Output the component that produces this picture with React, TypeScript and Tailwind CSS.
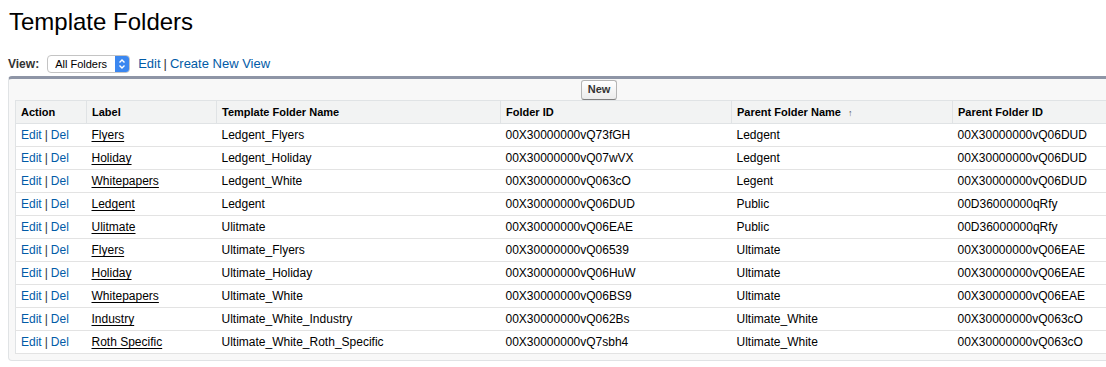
import React from 'react';

interface FolderRow {
  label: string;
  name: string;
  id: string;
  parent: string;
  parentId: string;
}

const rows: FolderRow[] = [
  { label: 'Flyers', name: 'Ledgent_Flyers', id: '00X30000000vQ73fGH', parent: 'Ledgent', parentId: '00X30000000vQ06DUD' },
  { label: 'Holiday', name: 'Ledgent_Holiday', id: '00X30000000vQ07wVX', parent: 'Ledgent', parentId: '00X30000000vQ06DUD' },
  { label: 'Whitepapers', name: 'Ledgent_White', id: '00X30000000vQ063cO', parent: 'Legent', parentId: '00X30000000vQ06DUD' },
  { label: 'Ledgent', name: 'Ledgent', id: '00X30000000vQ06DUD', parent: 'Public', parentId: '00D36000000qRfy' },
  { label: 'Ulitmate', name: 'Ulitmate', id: '00X30000000vQ06EAE', parent: 'Public', parentId: '00D36000000qRfy' },
  { label: 'Flyers', name: 'Ultimate_Flyers', id: '00X30000000vQ06539', parent: 'Ultimate', parentId: '00X30000000vQ06EAE' },
  { label: 'Holiday', name: 'Ultimate_Holiday', id: '00X30000000vQ06HuW', parent: 'Ultimate', parentId: '00X30000000vQ06EAE' },
  { label: 'Whitepapers', name: 'Ultimate_White', id: '00X30000000vQ06BS9', parent: 'Ultimate', parentId: '00X30000000vQ06EAE' },
  { label: 'Industry', name: 'Ultimate_White_Industry', id: '00X30000000vQ062Bs', parent: 'Ultimate_White', parentId: '00X30000000vQ063cO' },
  { label: 'Roth Specific', name: 'Ultimate_White_Roth_Specific', id: '00X30000000vQ7sbh4', parent: 'Ultimate_White', parentId: '00X30000000vQ063cO' },
];

const th = 'h-[23px] border-b border-l border-[#e0e3e5] px-[5px] text-left align-middle text-[11px] font-bold text-black first:border-l-0';
const td = 'h-[23px] border-b border-[#e3e3e3] px-[5px] align-middle text-[12px] text-black';

export default function App() {
  return (
    <div className="w-[1106px] h-[367px] overflow-hidden bg-white font-['Liberation_Sans',Arial,sans-serif]">
      <h1 className="pl-[9px] pt-[7px] text-[24px] leading-[30px] font-normal text-black">Template Folders</h1>

      <div className="flex items-center h-[20px] mt-[17px] pl-[8px]">
        <span className="text-[12px] font-bold text-[#333]">View:</span>
        <div className="ml-[8px] flex items-center h-[18px] w-[83px] rounded-[4px] border border-[#c4c4c4] bg-white overflow-hidden">
          <span className="flex-1 pl-[7px] text-[11px] text-black leading-none">All Folders</span>
          <span className="w-[14px] h-full bg-[#3b87f0] flex items-center justify-center">
            <svg width="8" height="12" viewBox="0 0 8 12" fill="none" stroke="white" strokeWidth="1.4">
              <path d="M1.5 4.5 L4 2 L6.5 4.5" />
              <path d="M1.5 7.5 L4 10 L6.5 7.5" />
            </svg>
          </span>
        </div>
        <span className="ml-[8px] text-[13px] text-[#015ba7]">Edit</span>
        <span className="mx-[3px] text-[13px] text-[#333]">|</span>
        <span className="text-[13px] text-[#015ba7]">Create New View</span>
      </div>

      <div className="ml-[8px] mt-[2px] w-[1182px] rounded-[4px] border border-[#e0e3e5] border-t-[3px] border-t-[#8e95a6] bg-[#f8f8f8] px-[6px] pb-[6px]">
        <div className="flex justify-center h-[21px] items-center">
          <button className="h-[20px] px-[6px] rounded-[3px] border border-[#b5b5b5] border-b-[#7f7f7f] bg-gradient-to-b from-white to-[#ececec] text-[11px] font-bold text-[#333]">
            New
          </button>
        </div>
        <table className="w-full table-fixed border-collapse border border-[#e0e3e5] bg-white">
          <colgroup>
            <col className="w-[71px]" />
            <col className="w-[130px]" />
            <col className="w-[284px]" />
            <col className="w-[231px]" />
            <col className="w-[221px]" />
            <col />
          </colgroup>
          <thead>
            <tr className="bg-[#f2f3f3]">
              <th className={th}>Action</th>
              <th className={th}>Label</th>
              <th className={th}>Template Folder Name</th>
              <th className={th}>Folder ID</th>
              <th className={th}>
                Parent Folder Name <span className="ml-[4px] text-[9px] font-normal text-[#555]">↑</span>
              </th>
              <th className={th}>Parent Folder ID</th>
            </tr>
          </thead>
          <tbody>
            {rows.map((r, i) => (
              <tr key={i}>
                <td className={td}>
                  <span className="text-[#015ba7]">Edit</span>
                  <span className="mx-[3px] text-[#333]">|</span>
                  <span className="text-[#015ba7]">Del</span>
                </td>
                <td className={td}>
                  <span className="underline underline-offset-[2px]">{r.label}</span>
                </td>
                <td className={td}>{r.name}</td>
                <td className={td}>{r.id}</td>
                <td className={td}>{r.parent}</td>
                <td className={td}>{r.parentId}</td>
              </tr>
            ))}
          </tbody>
        </table>
      </div>
    </div>
  );
}
